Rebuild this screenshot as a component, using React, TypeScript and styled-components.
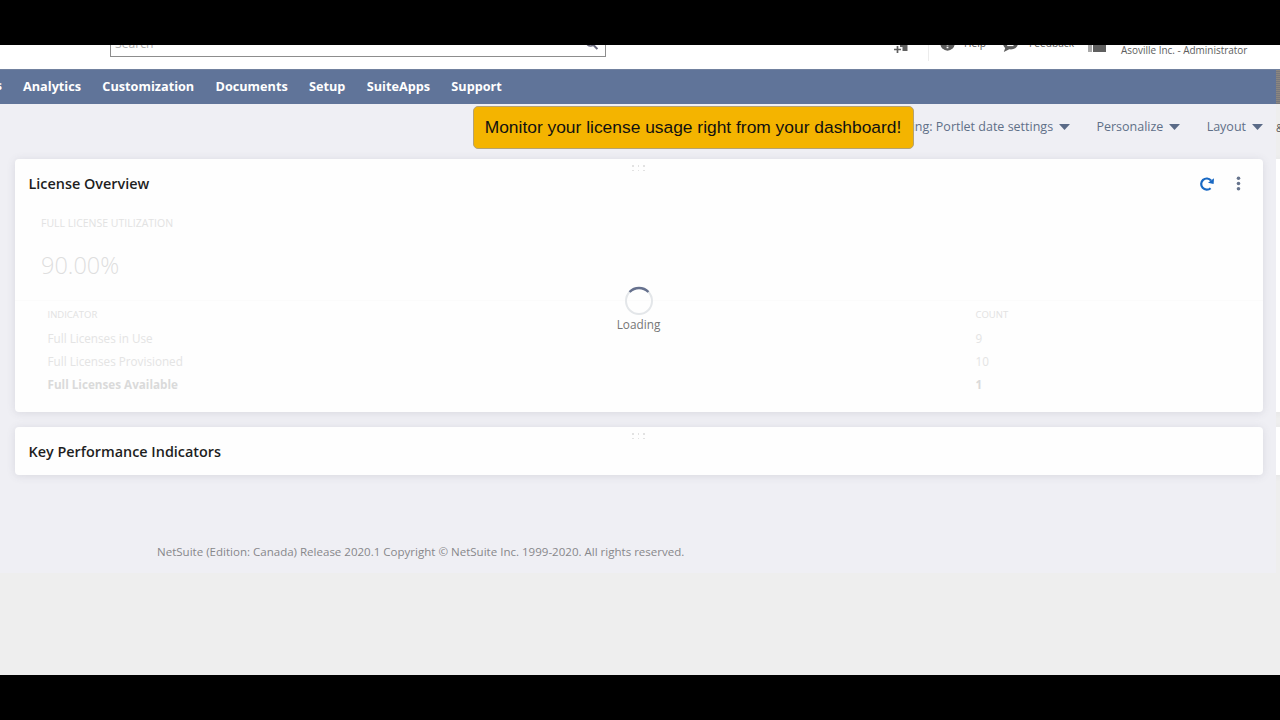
import React from "react";
import styled, { createGlobalStyle } from "styled-components";

const GlobalStyle = createGlobalStyle`
  body { margin: 0; background: #000; }
  * { box-sizing: border-box; }
`;

const Stage = styled.div`
  width: 1280px;
  height: 720px;
  padding: 45px 0;
  background: #000;
  overflow: hidden;
  font-family: "Open Sans", "Noto Sans", sans-serif;
`;

const Screen = styled.div`
  position: relative;
  display: grid;
  grid-template-rows: 24px 35px 1fr;
  height: 630px;
  overflow: hidden;
  background: #fff;
`;

const Header = styled.header`
  display: flex;
  align-items: flex-end;
  height: 24px;
  overflow: hidden;
  padding-left: 110px;
`;

const SearchBox = styled.div`
  display: flex;
  flex: none;
  align-items: center;
  justify-content: space-between;
  width: 496px;
  height: 27px;
  margin-bottom: 12px;
  padding: 0 7px 0 4px;
  border: 1px solid #8d8d8d;
  color: #b0b0b0;
  font-size: 12.2px;
`;

const HeaderTools = styled.div`
  display: flex;
  flex: none;
  align-items: flex-end;
  margin-left: 287px;
  height: 40px;
  color: #5e5e5e;
  font-size: 10.2px;
  line-height: 15px;
`;

const ToolIcon = styled.svg<{ $left: number; $bottom: number }>`
  flex: none;
  margin-left: ${(p) => p.$left}px;
  margin-bottom: ${(p) => p.$bottom}px;
`;

const HeaderDivider = styled.div`
  width: 1px;
  height: 30px;
  margin: 0 0 8px 19px;
  background: #ececec;
`;

const ToolLabel = styled.span<{ $left: number; $width: number }>`
  flex: none;
  width: ${(p) => p.$width}px;
  margin: 0 0 18px ${(p) => p.$left}px;
  white-space: nowrap;
`;

const Role = styled.span`
  flex: none;
  margin: 0 0 11px 15px;
  font-size: 9.95px;
  line-height: 15px;
  white-space: nowrap;
`;

const Nav = styled.nav`
  display: flex;
  align-items: center;
  height: 35px;
  background: #607499;
  border-top: 1px solid #71819f;
`;

const NavClipped = styled.span`
  display: flex;
  justify-content: flex-end;
  width: 2px;
  margin-right: 21px;
  padding-bottom: 2px;
  overflow: hidden;
  color: #fff;
  font-size: 12.5px;
  font-weight: 700;
  line-height: 32px;
`;

const NavLink = styled.a`
  margin-right: 21.3px;
  padding-bottom: 2px;
  color: #fff;
  font-size: 12.7px;
  font-weight: 700;
  line-height: 32px;
  white-space: nowrap;
`;

const NavEdge = styled.span`
  width: 4px;
  height: 100%;
  margin-left: auto;
  background: repeating-linear-gradient(#8b8680 0 1px, #77777c 1px 2px);
`;

const Body = styled.div`
  display: grid;
  grid-template-columns: 1276px 4px;
  min-height: 0;
`;

const Dashboard = styled.main`
  display: flex;
  flex-direction: column;
  min-width: 0;
  background: linear-gradient(#efeff4 0 469px, #eeeeee 469px);
`;

const Toolbar = styled.div`
  display: flex;
  align-items: center;
  justify-content: flex-end;
  gap: 26.3px;
  height: 55px;
  padding: 0 13px 9px 0;
`;

const Dropdown = styled.span`
  display: flex;
  align-items: center;
  gap: 6px;
  color: #5f7088;
  font-size: 12.5px;
  line-height: 20px;
  white-space: nowrap;
`;

const Card = styled.section<{ $height: number }>`
  display: flex;
  flex: none;
  flex-direction: column;
  height: ${(p) => p.$height}px;
  margin: 0 13px 15px 15px;
  border-radius: 4px;
  background: #fefefe;
  box-shadow: 0 1px 8px rgba(70, 70, 90, 0.13);
`;

const CardHead = styled.div`
  display: grid;
  grid-template-columns: 1fr auto 1fr;
  flex: none;
  height: 49px;
  padding: 0 22px 0 13.5px;
`;

const CardTitle = styled.h2`
  margin: 0;
  color: #1e1e1e;
  font-size: 14.4px;
  font-weight: 600;
  line-height: 49px;
  white-space: nowrap;
`;

const Grip = styled.div`
  display: grid;
  grid-template-columns: repeat(3, 1.5px);
  grid-auto-rows: 1.5px;
  gap: 3px 4px;
  padding: 6px 0 0 7px;
`;

const GripDot = styled.i`
  background: #e2e2e2;
`;

const CardActions = styled.div`
  display: flex;
  align-items: center;
  justify-content: flex-end;
  gap: 21px;
`;

const CardBody = styled.div`
  position: relative;
  flex: 1;
`;

const Metric = styled.div`
  display: flex;
  flex-direction: column;
  height: 93px;
  padding: 8px 0 0 26px;
  border-bottom: 1px solid #fbfbfb;
`;

const MetricLabel = styled.span`
  color: #e2e2e2;
  font-size: 10.5px;
  line-height: 14px;
`;

const MetricValue = styled.span`
  margin-top: 19px;
  color: #dedede;
  font-size: 23.5px;
  font-weight: 300;
  line-height: 32px;
`;

const Table = styled.div`
  display: grid;
  grid-template-columns: 928px 1fr;
  grid-template-rows: 26px 22px 23px 23px;
  margin-left: 32.5px;
  align-items: center;
`;

const ColumnName = styled.span`
  color: #e2e2e2;
  font-size: 9.5px;
`;

const Cell = styled.span<{ $strong?: boolean }>`
  color: ${(p) => (p.$strong ? "#dadada" : "#e4e4e4")};
  font-size: 11.7px;
  font-weight: ${(p) => (p.$strong ? 700 : 400)};
  line-height: 18px;
`;

const LoadingOverlay = styled.div`
  position: absolute;
  inset: 78px 1px auto 0;
  display: flex;
  flex-direction: column;
  align-items: center;
  color: #767676;
  font-size: 11.8px;
  line-height: 16px;
`;

const Footer = styled.footer`
  margin-top: 52px;
  padding-left: 157px;
  color: #87878b;
  font-size: 11.54px;
  line-height: 20px;
  white-space: nowrap;
`;

const NextColumn = styled.aside`
  display: flex;
  flex-direction: column;
  overflow: hidden;
  background: #eeeeee;
`;

const NextBar = styled.div`
  height: 55px;
  padding-top: 14px;
  color: #555;
  font-size: 10px;
  line-height: 20px;
`;

const NextCard = styled.div<{ $height: number }>`
  flex: none;
  height: ${(p) => p.$height}px;
  margin-bottom: 15px;
  background: #fff;
  box-shadow: 0 1px 6px rgba(70, 70, 90, 0.12);
`;

const Callout = styled.div`
  position: absolute;
  top: 61px;
  left: 473px;
  width: 441px;
  height: 43px;
  padding-right: 1px;
  border: 1.5px solid #b4a274;
  border-radius: 5px;
  background: #f4b400;
  color: #111;
  font-family: "Liberation Sans", Arial, sans-serif;
  font-size: 17.4px;
  line-height: 41px;
  text-align: center;
  white-space: nowrap;
`;

const Caret = () => (
  <svg width="11" height="6" viewBox="0 0 11 6">
    <path d="M0 0H11L5.5 6Z" fill="#5a6a87" />
  </svg>
);

const DragGrip = () => (
  <Grip>
    {[0, 1, 2, 3, 4, 5].map((n) => (
      <GripDot key={n} />
    ))}
  </Grip>
);

const navItems = ["Analytics", "Customization", "Documents", "Setup", "SuiteApps", "Support"];
const menus = ["Viewing: Portlet date settings", "Personalize", "Layout"];
const rows = [
  { name: "Full Licenses in Use", count: "9" },
  { name: "Full Licenses Provisioned", count: "10" },
  { name: "Full Licenses Available", count: "1", strong: true },
];

export default function App() {
  return (
    <>
      <GlobalStyle />
      <Stage>
        <Screen>
          <Header>
            <SearchBox>
              <span>Search</span>
              <svg width="13" height="13" viewBox="0 0 13 13" fill="none" stroke="#68687c">
                <circle cx="5.5" cy="5" r="4" strokeWidth="1.7" />
                <path d="M8.4 8L12.4 12" strokeWidth="2" />
              </svg>
            </SearchBox>
            <HeaderTools>
              <ToolIcon $left={0} $bottom={16} width="16" height="16" viewBox="0 0 16 16">
                <path d="M7 6L11 2L14.5 5V14H9.5V10H7Z" fill="#606060" />
                <path d="M4.5 9V16M1 12.5H8" stroke="#606060" strokeWidth="1.7" />
              </ToolIcon>
              <HeaderDivider />
              <ToolIcon $left={11} $bottom={18} width="15" height="15" viewBox="0 0 15 15">
                <circle cx="7.5" cy="7.5" r="7.2" fill="#5c5c5c" />
                <path d="M5 5.5Q5 3 7.5 3T10 5.5Q10 7 7.5 8.5V9.5M7.5 10.8V12.2" fill="none" stroke="#fff" strokeWidth="1.8" />
              </ToolIcon>
              <ToolLabel $left={9} $width={22}>Help</ToolLabel>
              <ToolIcon $left={17} $bottom={17} width="15" height="15" viewBox="0 0 15 15">
                <path d="M7.5 0C3.5 0 0 2.6 0 6.2C0 8.8 1.5 10.3 2.2 11L.8 15L6.3 12.3C11.5 13 15 10 15 6.2C15 2.6 11.5 0 7.5 0Z" fill="#5c5c5c" />
                <path d="M4.2 8.4H10.5" stroke="#fff" strokeWidth="1.4" />
              </ToolIcon>
              <ToolLabel $left={11} $width={46}>Feedback</ToolLabel>
              <ToolIcon $left={13} $bottom={17} width="18" height="15" viewBox="0 0 18 15">
                <path d="M0 3H4V15H0Z" fill="#a9a9a9" />
                <path d="M5 0H18V15H5Z" fill="#5e5e5e" />
              </ToolIcon>
              <Role>Asoville Inc. - Administrator</Role>
            </HeaderTools>
          </Header>
          <Nav>
            <NavClipped>s</NavClipped>
            {navItems.map((item) => (
              <NavLink key={item}>{item}</NavLink>
            ))}
            <NavEdge />
          </Nav>
          <Body>
            <Dashboard>
              <Toolbar>
                {menus.map((label) => (
                  <Dropdown key={label}>
                    {label}
                    <Caret />
                  </Dropdown>
                ))}
              </Toolbar>
              <Card $height={253}>
                <CardHead>
                  <CardTitle>License Overview</CardTitle>
                  <DragGrip />
                  <CardActions>
                    <svg width="16" height="16" viewBox="0 0 16 16" fill="none">
                      <path d="M11.6 12.2A5.6 5.6 0 1 1 12 4.4" stroke="#1868c3" strokeWidth="2.2" />
                      <path d="M15 2.2L14.6 8L9 6.8Z" fill="#1868c3" />
                    </svg>
                    <svg width="5" height="15" viewBox="0 0 5 15" fill="#66748d">
                      <circle cx="2.5" cy="2.2" r="1.8" />
                      <circle cx="2.5" cy="7.5" r="1.8" />
                      <circle cx="2.5" cy="12.8" r="1.8" />
                    </svg>
                  </CardActions>
                </CardHead>
                <CardBody>
                  <Metric>
                    <MetricLabel>FULL LICENSE UTILIZATION</MetricLabel>
                    <MetricValue>90.00%</MetricValue>
                  </Metric>
                  <Table>
                    <ColumnName>INDICATOR</ColumnName>
                    <ColumnName>COUNT</ColumnName>
                    {rows.map((row) => (
                      <React.Fragment key={row.name}>
                        <Cell $strong={row.strong}>{row.name}</Cell>
                        <Cell $strong={row.strong}>{row.count}</Cell>
                      </React.Fragment>
                    ))}
                  </Table>
                  <LoadingOverlay>
                    <svg width="30" height="30" viewBox="0 0 30 30" fill="none">
                      <circle cx="15" cy="15" r="13" stroke="#e3e6e9" strokeWidth="2" />
                      <path d="M5.6 6A13 13 0 0 1 24.4 6" stroke="#66718e" strokeWidth="2.5" />
                    </svg>
                    <span>Loading</span>
                  </LoadingOverlay>
                </CardBody>
              </Card>
              <Card $height={48}>
                <CardHead>
                  <CardTitle>Key Performance Indicators</CardTitle>
                  <DragGrip />
                  <CardActions />
                </CardHead>
              </Card>
              <Footer>
                NetSuite (Edition: Canada) Release 2020.1 Copyright © NetSuite Inc. 1999-2020. All rights reserved.
              </Footer>
            </Dashboard>
            <NextColumn>
              <NextBar>&amp;</NextBar>
              <NextCard $height={253} />
              <NextCard $height={48} />
            </NextColumn>
          </Body>
          <Callout>Monitor your license usage right from your dashboard!</Callout>
        </Screen>
      </Stage>
    </>
  );
}
